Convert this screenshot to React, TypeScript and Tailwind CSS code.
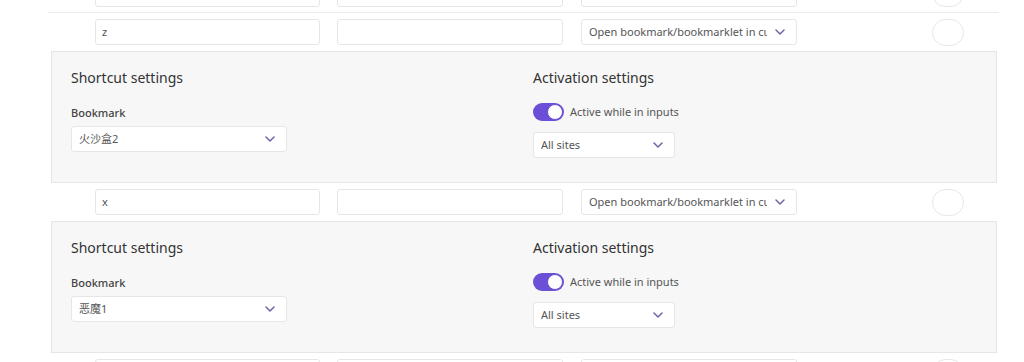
import React from "react";

const FONT = "font-['Segoe_UI','Noto_Sans','Noto_Sans_CJK_SC',sans-serif]";

function Chevron() {
  return (
    <svg width="10" height="6" viewBox="0 0 10 6" className="shrink-0">
      <path d="M1 1 L5 5 L9 1" fill="none" stroke="#6e62a8" strokeWidth="1.5" strokeLinecap="round" strokeLinejoin="round" />
    </svg>
  );
}

function Select({ value, w }: { value: string; w: string }) {
  return (
    <div className={`${w} h-[26px] bg-white border border-[#e6e6e6] rounded-[3px] flex items-center pl-[7px] pr-[11px] gap-[8px]`}>
      <span className="flex-1 min-w-0 overflow-hidden whitespace-nowrap text-[11px] text-[#555]">{value}</span>
      <Chevron />
    </div>
  );
}

function Row({ keyText, action, border }: { keyText: string; action: string; border: boolean }) {
  return (
    <div className={`h-[38px] flex items-center ${border ? "border-b border-[#ebebeb]" : ""}`}>
      <div className="ml-[47px] w-[225px] h-[26px] bg-white border border-[#e6e6e6] rounded-[3px] flex items-center pl-[6px] text-[11px] text-[#555]">
        {keyText}
      </div>
      <div className="ml-[17px] w-[226px] h-[26px] bg-white border border-[#e6e6e6] rounded-[3px]" />
      <div className="ml-[18px]">
        <Select value={action} w="w-[216px]" />
      </div>
      <div className="ml-[135px] w-[32px] h-[27px] rounded-full border border-[#e6e6e6] bg-white" />
    </div>
  );
}

function Panel({ bookmark }: { bookmark: string }) {
  return (
    <div className="ml-[3px] w-[946px] h-[132px] bg-[#f7f7f7] border border-[#e6e6e6] flex pl-[19px] pt-[16px]">
      <div className="w-[462px]">
        <div className="text-[14px] leading-[20px] text-[#333]">Shortcut settings</div>
        <div className="mt-[17px] text-[11px] leading-[16px] font-medium text-[#444]">Bookmark</div>
        <div className="mt-[5px]">
          <Select value={bookmark} w="w-[216px]" />
        </div>
      </div>
      <div>
        <div className="text-[14px] leading-[20px] text-[#333]">Activation settings</div>
        <div className="mt-[15px] flex items-center h-[18px]">
          <div className="w-[31px] h-[18px] rounded-full bg-[#6b4fd6] relative">
            <div className="absolute right-[1px] top-[1px] w-[16px] h-[16px] rounded-full bg-white border border-[#6b4fd6]" />
          </div>
          <span className="ml-[6px] text-[11px] text-[#555]">Active while in inputs</span>
        </div>
        <div className="mt-[11px]">
          <Select value="All sites" w="w-[142px]" />
        </div>
      </div>
    </div>
  );
}

export default function App() {
  return (
    <div className={`w-[1024px] h-[362px] overflow-hidden bg-white ${FONT}`}>
      <div className="ml-[48px] w-[951px] -mt-[25px]">
        <Row keyText="" action="Reload page" border={true} />
        <Row keyText="z" action="Open bookmark/bookmarklet in current tab" border={false} />
        <Panel bookmark="火沙盒2" />
        <Row keyText="x" action="Open bookmark/bookmarklet in current tab" border={false} />
        <Panel bookmark="恶魔1" />
        <Row keyText="" action="" border={false} />
      </div>
    </div>
  );
}
